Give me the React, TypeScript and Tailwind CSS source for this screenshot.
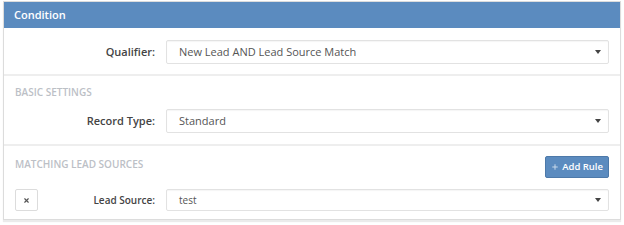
import { Plus, X } from 'lucide-react';

function Caret() {
  return (
    <svg className="w-[6px] h-[4px]" viewBox="0 0 6 4">
      <path d="M0 0h6L3 4z" fill="#444" />
    </svg>
  );
}

function Select({ value, small }: { value: string; small?: boolean }) {
  return (
    <div
      className={`flex-1 flex items-center justify-between border border-[#e2e2e2] rounded-[2px] bg-white pl-[12px] pr-[7px] shadow-[inset_0_1px_1px_rgba(0,0,0,0.04)] ${
        small ? 'h-[22px] text-[10px]' : 'h-[24px] text-[11px]'
      } text-[#555]`}
    >
      <span>{value}</span>
      <Caret />
    </div>
  );
}

function FieldRow({ label, value, small }: { label: string; value: string; small?: boolean }) {
  return (
    <div className="flex items-center">
      <div
        className={`w-[162px] text-right pr-[11px] font-semibold text-[#444] ${
          small ? 'text-[10px]' : 'text-[11px]'
        }`}
      >
        {label}
      </div>
      <Select value={value} small={small} />
    </div>
  );
}

export default function App() {
  return (
    <div className="w-[624px] h-[225px] bg-white pt-[1px] pl-[3px] pr-[3px]" style={{ fontFamily: '"Open Sans", sans-serif' }}>
      <div className="w-[618px] border border-[#dcdcdc] shadow-[0_2px_1px_rgba(0,0,0,0.08)]">
        {/* Header */}
        <div className="h-[26px] bg-[#5b8bbf] flex items-center px-[10px] text-white text-[11px] font-semibold">
          Condition
        </div>

        {/* Qualifier */}
        <div className="bg-white pt-[12px] pb-[10px] pr-[11px]">
          <FieldRow label="Qualifier:" value="New Lead AND Lead Source Match" />
        </div>

        <div className="h-[2px] bg-[#eeeeee]" />

        {/* Basic settings */}
        <div className="bg-white pt-[9px] pb-[11px] pr-[11px]">
          <div className="pl-[11px] text-[10px] font-semibold text-[#bcc0c6] uppercase mb-[9px]">Basic Settings</div>
          <FieldRow label="Record Type:" value="Standard" />
        </div>

        <div className="h-[2px] bg-[#eeeeee]" />

        {/* Matching lead sources */}
        <div className="bg-white pt-[10px] pb-[8px] pr-[11px]">
          <div className="flex items-start justify-between">
            <div className="pl-[11px] pt-[1px] text-[10px] font-semibold text-[#bcc0c6] uppercase">Matching Lead Sources</div>
            <button className="h-[22px] px-[5px] flex items-center gap-[3px] bg-[#5b8bbf] border border-[#4d79a9] rounded-[2px] text-white text-[9.5px] font-semibold">
              <Plus className="w-[8px] h-[8px] text-[#c8d8ea]" strokeWidth={3} />
              Add Rule
            </button>
          </div>
          <div className="flex items-center mt-[11px]">
            <div className="w-[162px] flex items-center justify-between pl-[11px]">
              <div className="w-[23px] h-[22px] border border-[#dcdcdc] rounded-[2px] flex items-center justify-center">
                <X className="w-[7px] h-[7px] text-[#555]" strokeWidth={4} />
              </div>
              <span className="pr-[11px] text-[10px] font-semibold text-[#444]">Lead Source:</span>
            </div>
            <Select value="test" small />
          </div>
        </div>
      </div>
    </div>
  );
}
